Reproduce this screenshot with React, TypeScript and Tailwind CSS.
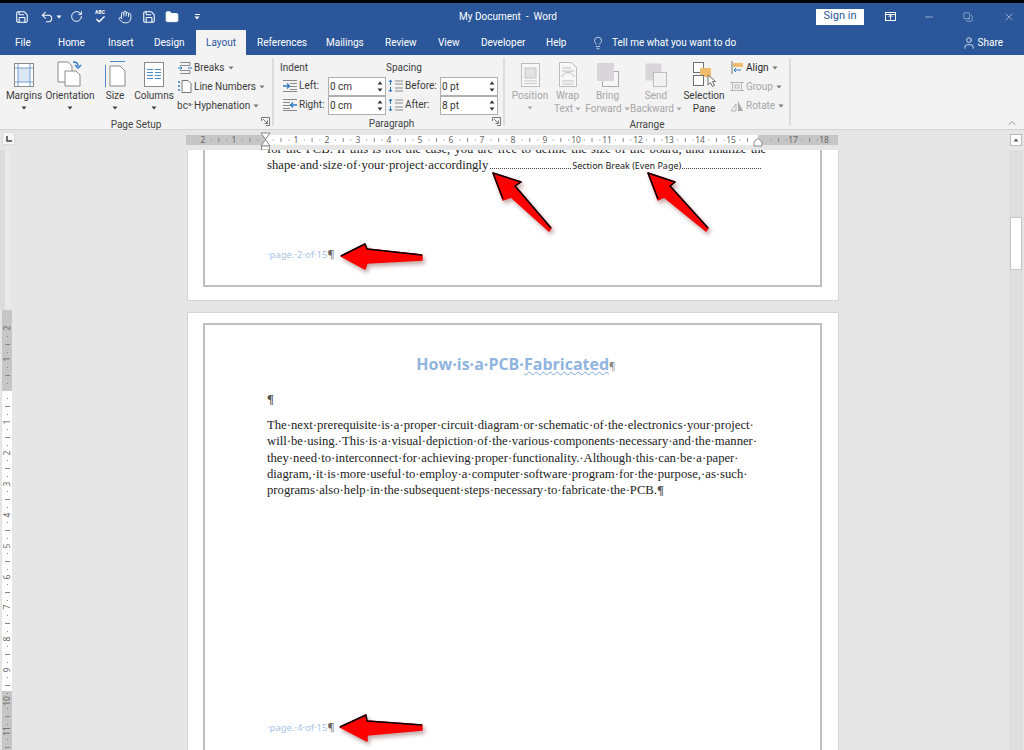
import React from "react";
import { Save, Undo2, RotateCw, Hand, Lightbulb, User, Minus, X, Copy, ChevronUp, Folder, Check } from "lucide-react";

const Caret = ({ className = "" }: { className?: string }) => (
  <svg width="6" height="4" viewBox="0 0 6 4" className={className}><path d="M0.5 0.5h5L3 3.5z" fill="currentColor" /></svg>
);

const Launcher = () => (
  <svg width="9" height="9" viewBox="0 0 9 9" fill="none" stroke="#777"><path d="M.5 4V.5H8.5V8.5H5" /><path d="M2 2l4.5 4.5M6.5 3.5v3h-3" /></svg>
);

const tabs: [string, string][] = [
  ["Home", "w-[50px]"],
  ["Insert", "w-[46px]"],
  ["Design", "w-[42px]"],
];
const tabs2: [string, string][] = [
  ["References", "w-[69px]"],
  ["Mailings", "w-[59px]"],
  ["Review", "w-[53px]"],
  ["View", "w-[43px]"],
  ["Developer", "w-[65px]"],
  ["Help", "w-[45px]"],
];

const MarginsIcon = () => (
  <svg width="20" height="24" viewBox="0 0 20 24" fill="none">
    <rect x=".5" y=".5" width="19" height="23" fill="#fff" stroke="#8a8a8a" />
    <rect x="4" y="5" width="12" height="14" fill="#dbe7f3" />
    <path d="M4 .5v23M16 .5v23M.5 5h19M.5 19h19" stroke="#6f9fd0" />
  </svg>
);
const OrientationIcon = () => (
  <svg width="26" height="26" viewBox="0 0 26 26" fill="none">
    <path d="M1 1h10l4 4v16H1z" fill="#fff" stroke="#8a8a8a" />
    <path d="M8 10h11l4 4v11H8z" fill="#fff" stroke="#8a8a8a" />
    <path d="M16 1c3 0 5 1 5 4M18 4l3 3 3-3" stroke="#2f79c4" strokeWidth="1.5" />
  </svg>
);
const SizeIcon = () => (
  <svg width="21" height="26" viewBox="0 0 21 26" fill="none">
    <path d="M5 .5h15M.5 4v22" stroke="#4b8ac9" />
    <path d="M5 5h10l5 5v15H5z" fill="#fff" stroke="#8a8a8a" />
  </svg>
);
const ColumnsIcon = () => (
  <svg width="20" height="25" viewBox="0 0 20 25" fill="none">
    <rect x=".5" y=".5" width="19" height="24" fill="#fff" stroke="#8a8a8a" />
    <path d="M3 7.5h6M11 7.5h6M3 10.5h6M11 10.5h6M3 13.5h6M11 13.5h6M3 16.5h6M11 16.5h6" stroke="#4b8ac9" />
  </svg>
);

const BigBtn = ({ w, icon, lines, caret = false, disabled = false, ml = "" }: { w: string; icon: React.ReactNode; lines: React.ReactNode[]; caret?: boolean; disabled?: boolean; ml?: string }) => (
  <div className={`flex flex-col items-center shrink-0 ${w} ${ml} ${disabled ? "text-[#a6a6a6]" : "text-[#3c3c3c]"}`}>
    <div className="h-[29px] flex items-end justify-center">{icon}</div>
    <div className="mt-[2px] leading-[13px] text-center whitespace-nowrap">{lines[0]}</div>
    {lines[1] ? <div className="leading-[13px] text-center whitespace-nowrap flex items-center gap-[2px]">{lines[1]}</div> : null}
    {caret ? <Caret className="mt-[4px]" /> : null}
  </div>
);

const SmallRow = ({ icon, label, disabled = false, bold = false }: { icon: React.ReactNode; label: string; disabled?: boolean; bold?: boolean }) => (
  <div className={`h-[19px] flex items-center ${disabled ? "text-[#a6a6a6]" : bold ? "text-[#262626]" : "text-[#3c3c3c]"}`}>
    <div className="w-[16px] flex justify-center shrink-0">{icon}</div>
    <span className="ml-[1px]">{label}</span>
    <Caret className="ml-[3px] text-[#777]" />
  </div>
);

const Spin = ({ value }: { value: string }) => (
  <div className="h-[19px] w-[58px] -mb-px bg-white border border-[#b0b0b0] flex items-center justify-between pl-[1px] pr-[2px] text-[#333]">
    <span>{value}</span>
    <div className="flex flex-col gap-[3px] text-[#333]">
      <Caret className="rotate-180" />
      <Caret />
    </div>
  </div>
);

const IndentIcon = ({ flip = false, spacing = false }: { flip?: boolean; spacing?: boolean }) =>
  spacing ? (
    <svg width="15" height="14" viewBox="0 0 15 14" fill="none">
      <path d="M7 2h8M7 5h8M7 9h8M7 12h8" stroke="#8a8a8a" />
      <path d="M2.5 1v5M2.5 8v5M1 3l1.5-2L4 3M1 11l1.5 2L4 11" stroke="#2f79c4" />
    </svg>
  ) : (
    <svg width="14" height="12" viewBox="0 0 14 12" fill="none" className={flip ? "-scale-x-100" : ""}>
      <path d="M0 .5h14M7 3.5h7M7 6.5h7M7 9.5h7M0 11.5h14" stroke="#8a8a8a" />
      <path d="M0 6h6M4 3.5L6.5 6 4 8.5" stroke="#2f79c4" strokeWidth="1.3" />
    </svg>
  );

const PositionIcon = () => (
  <svg width="19" height="24" viewBox="0 0 19 24" fill="none">
    <rect x=".5" y=".5" width="18" height="23" fill="#f7f7f7" stroke="#bdbdbd" />
    <rect x="4" y="5" width="11" height="10" fill="#e2e2e2" stroke="#c8c8c8" />
    <path d="M3 18h13M3 20.5h13" stroke="#c8c8c8" />
  </svg>
);
const WrapIcon = () => (
  <svg width="18" height="25" viewBox="0 0 18 25" fill="none">
    <path d="M.5.5h12l5 5v19H.5z" fill="#f7f7f7" stroke="#bdbdbd" />
    <path d="M3 6h9M3 9h12M3 19h12M3 22h12M3 15c1-6 11-6 12 0" stroke="#c0c0c0" />
  </svg>
);
const BringIcon = ({ back = false }: { back?: boolean }) => (
  <svg width="22" height="24" viewBox="0 0 22 24" fill="none">
    {back ? (
      <>
        <rect x=".5" y=".5" width="16" height="17" fill="#d9d6da" />
        <rect x="8.5" y="9.5" width="13" height="14" fill="#f2f2f2" stroke="#bdbdbd" />
      </>
    ) : (
      <>
        <rect x="5.5" y="8.5" width="16" height="15" fill="#f7f7f7" stroke="#aaa" />
        <rect x="0" y="0" width="17" height="18" fill="#d9d6da" />
      </>
    )}
  </svg>
);
const SelectionIcon = () => (
  <svg width="23" height="25" viewBox="0 0 23 25" fill="none">
    <rect x=".5" y=".5" width="10" height="10" fill="#fff" stroke="#6f6f6f" />
    <rect x="7" y="6" width="11" height="9" fill="#f0bb6d" />
    <rect x=".5" y="13.5" width="10" height="10" fill="#fff" stroke="#6f6f6f" />
    <path d="M15 13v10l2.500-2.500 2 4 2-1-2-4h3z" fill="#fff" stroke="#6f6f6f" />
  </svg>
);

const RULER_NUMS: [string, number][] = [
  ["2", 203], ["1", 234], ["1", 296], ["2", 327], ["3", 358], ["4", 389], ["5", 420], ["6", 451], ["7", 482], ["8", 513], ["9", 545],
  ["10", 576], ["11", 607], ["12", 638], ["13", 669], ["14", 700], ["15", 731], ["17", 793], ["18", 824],
];

const HRuler = () => {
  const ticks: React.ReactNode[] = [];
  for (let i = -2; i < 18; i++) {
    const b = 265 + i * 31.1;
    ticks.push(<rect key={`a${i}`} x={b + 15.5} y="8" width="1" height="4" fill="#888" />);
    ticks.push(<rect key={`b${i}`} x={b + 7.8} y="9.500" width="1" height="1" fill="#888" />);
    ticks.push(<rect key={`c${i}`} x={b + 23.3} y="9.500" width="1" height="1" fill="#888" />);
  }
  return (
    <svg width="1024" height="20" viewBox="0 0 1024 20" className="block">
      <rect x="186" y="5" width="80" height="10" fill="#c6c6c6" />
      <rect x="266" y="5" width="492" height="10" fill="#fff" />
      <rect x="758" y="5" width="80" height="10" fill="#c6c6c6" />
      {ticks}
      {RULER_NUMS.map(([n, x], i) => (
        <text key={i} x={x} y="13" textAnchor="middle" fontSize="8.5" fill="#666" fontFamily="Noto Sans, sans-serif">{n}</text>
      ))}
      <path d="M261 3h9l-4.500 6.500 4.500 6.500h-9l4.500-6.500z" fill="#fff" stroke="#8a8a8a" />
      <rect x="261.500" y="16" width="8" height="4" fill="#fff" stroke="#8a8a8a" />
      <path d="M754 16v-4l4-3.500 4 3.500v4z" fill="#fff" stroke="#8a8a8a" />
    </svg>
  );
};

const VRuler = () => {
  const nums: [string, number][] = [["2", 328], ["1", 359], ["1", 422], ["2", 453], ["3", 484], ["4", 515], ["5", 546], ["6", 577], ["7", 607], ["8", 639], ["9", 670], ["10", 701], ["11", 731]];
  const marks: React.ReactNode[] = [];
  for (let i = -3; i < 12; i++) {
    const b = 391 + i * 31;
    if (b < 300) continue;
    marks.push(<rect key={`a${i}`} x="5" y={b + 15 - 150} width="5" height="1" fill="#888" />);
    marks.push(<rect key={`b${i}`} x="7" y={b + 7 - 150} width="1" height="1" fill="#888" />);
    marks.push(<rect key={`c${i}`} x="7" y={b + 23 - 150} width="1" height="1" fill="#888" />);
  }
  return (
    <svg width="12" height="600" viewBox="0 0 12 600" className="block shrink-0">
      <rect x="0" y="0" width="5" height="160" fill="#dcdcdc" />
      <rect x="5" y="0" width="6" height="160" fill="#e9e9e9" />
      <rect x="2" y="160" width="10" height="81" fill="#c6c6c6" />
      <rect x="2" y="241" width="10" height="300" fill="#fff" />
      <rect x="2" y="541" width="10" height="59" fill="#c6c6c6" />
      {marks}
      {nums.map(([n, y], i) => (
        <text key={i} x="0" y="0" transform={`translate(10 ${y - 150}) rotate(-90)`} textAnchor="middle" fontSize="8.5" fill="#666" fontFamily="Noto Sans, sans-serif">{n}</text>
      ))}
    </svg>
  );
};

const Pil = () => <span className="text-[#555] font-bold">¶</span>;

const Arrow = ({ points, edge }: { points: string; edge: string }) => (
  <g>
    <polygon points={points} fill="#ff0000" stroke="#ff0000" strokeWidth="1.500" strokeLinejoin="round" />
    <polyline points={edge} fill="none" stroke="#000" strokeWidth="1.500" strokeLinejoin="round" />
  </g>
);

export default function App() {
  return (
    <div className="relative w-[1024px] h-[750px] overflow-hidden bg-[#e6e6e6] text-[10px] font-['Roboto',sans-serif]">
      <div className="h-[3px] bg-black" />
      {/* Title bar */}
      <div className="h-[27px] bg-[#2b579a] flex items-center text-white relative">
        <div className="flex items-center ml-[15px] w-[190px] text-white">
          <Save size={14} strokeWidth={1.8} />
          <Undo2 size={14} strokeWidth={1.8} className="ml-[11px]" />
          <Caret className="ml-[2px]" />
          <RotateCw size={13} strokeWidth={1.8} className="ml-[8px]" />
          <div className="ml-[10px] w-[14px] flex flex-col items-center leading-none">
            <span className="text-[5px] font-bold leading-[6px]">ABC</span>
            <Check size={11} strokeWidth={3} className="-mt-[1px]" />
          </div>
          <Hand size={14} strokeWidth={1.5} className="ml-[11px]" />
          <Save size={14} strokeWidth={1.8} className="ml-[10px]" />
          <Folder size={14} strokeWidth={1.5} fill="#fff" className="ml-[9px]" />
          <div className="ml-[15px] flex flex-col items-center gap-[1px]">
            <div className="w-[5px] h-px bg-white" />
            <Caret />
          </div>
        </div>
        <div className="ml-[254px] w-[91px] whitespace-nowrap">My Document&nbsp; -&nbsp; Word</div>
        <div className="ml-[266px] w-[48px] h-[16px] bg-white text-[#2b579a] flex items-center justify-center text-[11px]">Sign in</div>
        <svg width="11" height="9" viewBox="0 0 11 9" fill="none" stroke="#fff" className="ml-[21px]"><rect x=".5" y=".5" width="10" height="8" /><path d="M.5 2.500h10M5.500 7.500v-4M3.500 5l2-2 2 2" /></svg>
        <Minus size={12} strokeWidth={1} className="ml-[27px]" />
        <Copy size={10} strokeWidth={1} className="ml-[28px] -scale-x-100 -scale-y-100" />
        <X size={12} strokeWidth={1} className="ml-[30px]" />
      </div>
      {/* Tabs */}
      <div className="h-[25px] bg-[#2b579a] flex items-stretch text-white text-[10px]">
        <div className="w-[58px] pl-[15px] flex items-center shrink-0">File</div>
        {tabs.map(([t, w]) => (
          <div key={t} className={`${w} flex items-center h-full shrink-0`}>{t}</div>
        ))}
        <div className="w-[50px] h-[25px] bg-[#f3f3f3] text-[#2b579a] flex items-center justify-center shrink-0">Layout</div>
        <div className="flex items-center ml-[11px]">
          {tabs2.map(([t, w]) => (
            <div key={t} className={`${w} flex items-center h-full shrink-0 whitespace-nowrap`}>{t}</div>
          ))}
        </div>
        <Lightbulb size={14} strokeWidth={1.2} className="self-center" />
        <div className="ml-[7px] self-center whitespace-nowrap">Tell me what you want to do</div>
        <div className="ml-auto mr-[21px] flex items-center gap-[2px]">
          <User size={14} strokeWidth={1.3} />
          <span>Share</span>
        </div>
      </div>
      {/* Ribbon */}
      <div className="h-[75px] bg-[#f3f3f3] border-b border-[#d4d4d4] flex relative">
        {/* Page setup */}
        <div className="w-[274px] shrink-0 my-[3px] border-r-2 border-[#dcdcdc] flex flex-col relative">
          <div className="flex h-[58px] pl-[3px]">
            <BigBtn w="w-[42px]" icon={<MarginsIcon />} lines={["Margins"]} caret />
            <BigBtn w="w-[50px]" icon={<OrientationIcon />} lines={["Orientation"]} caret />
            <BigBtn w="w-[40px]" icon={<SizeIcon />} lines={["Size"]} caret />
            <BigBtn w="w-[38px]" icon={<ColumnsIcon />} lines={["Columns"]} caret />
            <div className="flex flex-col ml-[4px]">
              <SmallRow
                label="Breaks"
                icon={<svg width="14" height="12" viewBox="0 0 14 12" fill="none"><path d="M2 .5h10v3H2M2 11.500h10v-3H2" stroke="#8a8a8a" /><path d="M0 6h4M2.500 4.500L4 6 2.500 7.500M10 6h4" stroke="#2f79c4" /></svg>}
              />
              <SmallRow
                label="Line Numbers"
                icon={<svg width="14" height="13" viewBox="0 0 14 13" fill="none"><path d="M4 .5h6l3 3v9H4z" fill="#fff" stroke="#777" /><path d="M1 1v2M1 5v2M1 9v2" stroke="#2f79c4" strokeWidth="1.500" /></svg>}
              />
              <SmallRow
                label="Hyphenation"
                icon={<span className="text-[10px] leading-none text-[#444] whitespace-nowrap">bc<sup className="text-[6px]">a-</sup></span>}
              />
            </div>
          </div>
          <div className="text-center text-[#444] leading-[12px] mt-[4px]">Page Setup</div>
          <div className="absolute right-[2px] bottom-[0px]"><Launcher /></div>
        </div>
        {/* Paragraph */}
        <div className="w-[231px] shrink-0 my-[3px] border-r-2 border-[#dcdcdc] flex flex-col relative pl-[6px]">
          <div className="h-[58px] flex flex-col">
            <div className="flex h-[18px] items-center text-[#3c3c3c]">
              <span className="w-[106px]">Indent</span>
              <span>Spacing</span>
            </div>
            <div className="flex h-[19px] items-center text-[#3c3c3c]">
              <div className="w-[48px] flex items-center gap-[2px] pl-[3px]"><IndentIcon /><span>Left:</span></div>
              <Spin value="0 cm" />
              <div className="w-[54px] flex items-center gap-[2px] pl-[2px]"><IndentIcon spacing /><span>Before:</span></div>
              <Spin value="0 pt" />
            </div>
            <div className="flex h-[19px] items-center text-[#3c3c3c]">
              <div className="w-[48px] flex items-center gap-[2px] pl-[3px]"><IndentIcon flip /><span>Right:</span></div>
              <Spin value="0 cm" />
              <div className="w-[54px] flex items-center gap-[2px] pl-[2px]"><IndentIcon spacing /><span>After:</span></div>
              <Spin value="8 pt" />
            </div>
          </div>
          <div className="text-center text-[#444] leading-[12px] mt-[4px]">Paragraph</div>
          <div className="absolute right-[2px] bottom-[0px]"><Launcher /></div>
        </div>
        {/* Arrange */}
        <div className="w-[286px] shrink-0 my-[3px] border-r-2 border-[#dcdcdc] flex flex-col relative">
          <div className="flex h-[58px] pl-[5px]">
            <BigBtn w="w-[40px]" icon={<PositionIcon />} lines={["Position"]} caret disabled />
            <BigBtn w="w-[35px]" icon={<WrapIcon />} lines={["Wrap", <React.Fragment key="t">Text<Caret /></React.Fragment>]} disabled />
            <BigBtn w="w-[45px]" icon={<BringIcon />} lines={["Bring", <React.Fragment key="t">Forward<Caret /></React.Fragment>]} disabled />
            <BigBtn w="w-[52px]" icon={<BringIcon back />} lines={["Send", <React.Fragment key="t">Backward<Caret /></React.Fragment>]} disabled />
            <BigBtn w="w-[44px]" icon={<SelectionIcon />} lines={["Selection", "Pane"]} />
            <div className="flex flex-col ml-[3px]">
              <SmallRow
                bold
                label="Align"
                icon={<svg width="13" height="13" viewBox="0 0 13 13" fill="none"><path d="M1 0v13" stroke="#777" /><rect x="2" y="2" width="10" height="4" fill="#f0bb6d" /><path d="M10 9H3M5 7L3 9l2 2" stroke="#2f79c4" /></svg>}
              />
              <SmallRow
                disabled
                label="Group"
                icon={<svg width="14" height="13" viewBox="0 0 14 13" fill="none" stroke="#b5b5b5"><rect x="2.500" y="2.500" width="9" height="8" /><rect x="5" y="5" width="4" height="3" /><path d="M0 2.500h2M12 2.500h2M0 10.500h2M12 10.500h2" /></svg>}
              />
              <SmallRow
                disabled
                label="Rotate"
                icon={<svg width="14" height="12" viewBox="0 0 14 12"><path d="M1 11l5-7v7z" fill="none" stroke="#b5b5b5" /><path d="M8 1v10h5z" fill="#a8a8a8" /></svg>}
              />
            </div>
          </div>
          <div className="text-center text-[#444] leading-[12px] mt-[4px]">Arrange</div>
        </div>
        <ChevronUp size={12} strokeWidth={1.2} className="absolute right-[6px] bottom-[0px] text-[#555]" />
      </div>
      {/* Ruler row */}
      <div className="h-[20px] relative">
        <HRuler />
        <div className="absolute left-[2px] top-[2px] w-[13px] h-[13px] bg-[#f5f5f5] border border-[#dcdcdc] flex items-center justify-center">
          <svg width="6" height="6" viewBox="0 0 6 6"><path d="M1 0v5h5" fill="none" stroke="#444" strokeWidth="1.500" /></svg>
        </div>
        <div className="absolute right-[2px] top-[4px] w-[12px] h-[12px] bg-white border border-[#b8b8b8] flex items-center justify-center text-[#555]">
          <Caret className="rotate-180" />
        </div>
      </div>
      {/* Document */}
      <div className="h-[600px] flex overflow-hidden">
        <VRuler />
        <div className="w-[175px] shrink-0" />
        <div className="w-[652px] shrink-0 flex flex-col gap-[11px] font-['Liberation_Serif',serif] text-[12.7px] leading-[16.25px] text-[#222]">
          {/* Page 1 */}
          <div className="h-[151px] shrink-0 bg-white border border-t-0 border-[#d4d4d4] pl-[15px] pr-[16px] overflow-hidden">
            <div className="h-[137px] border-2 border-t-0 border-[#bfbfbf] pl-[62px] overflow-hidden relative">
              <div className="-mt-[9px] whitespace-nowrap">for·the·PCB.·If·this·is·not·the·case,·you·are·free·to·define·the·size·of·the·board,·and·finalize·the·</div>
              <div className="whitespace-nowrap flex items-baseline">
                <span>shape·and·size·of·your·project·accordingly</span>
                <span className="ml-[2px] w-[81px] h-0 border-b border-dotted border-[#444]" />
                <span className="ml-[1px] text-[9px] font-['Noto_Sans',sans-serif] text-[#222]">Section Break (Even Page)</span>
                <span className="ml-[1px] w-[79px] h-0 border-b border-dotted border-[#444]" />
              </div>
              <div className="mt-[71px] text-[9.5px] text-[#a9c5e8] font-['Noto_Sans',sans-serif] whitespace-nowrap">·page.·2·of·15<span className="text-[#666] text-[11px]">¶</span></div>
            </div>
          </div>
          {/* Page 2 */}
          <div className="flex-1 bg-white border border-b-0 border-[#d4d4d4] pl-[15px] pr-[16px] pt-[10px]">
            <div className="h-[450px] border-2 border-b-0 border-[#bfbfbf] pl-[62px] pr-[55px]">
              <div className="mt-[27px] text-center whitespace-nowrap font-['Open_Sans',sans-serif] font-bold text-[16px] leading-[24px] text-[#8fb4de]">
                How·is·a·PCB·<span className="underline decoration-wavy decoration-[#7da7d9] decoration-1">Fabricated</span><span className="text-[10px] text-[#888] font-normal">¶</span>
              </div>
              <div className="mt-[13px] h-[16px] text-[#333]"><Pil /></div>
              <div className="mt-[10px] whitespace-nowrap">
                <div>The·next·prerequisite·is·a·proper·circuit·diagram·or·schematic·of·the·electronics·your·project·</div>
                <div>will·be·using.·This·is·a·visual·depiction·of·the·various·components·necessary·and·the·manner·</div>
                <div>they·need·to·interconnect·for·achieving·proper·functionality.·Although·this·can·be·a·paper·</div>
                <div>diagram,·it·is·more·useful·to·employ·a·computer·software·program·for·the·purpose,·as·such·</div>
                <div>programs·also·help·in·the·subsequent·steps·necessary·to·fabricate·the·PCB.<Pil /></div>
              </div>
              <div className="mt-[221px] text-[9.5px] text-[#a9c5e8] font-['Noto_Sans',sans-serif] whitespace-nowrap">·page.·4·of·15<span className="text-[#666] text-[11px]">¶</span></div>
            </div>
          </div>
        </div>
        <div className="flex-1" />
        {/* Scrollbar */}
        <div className="w-[14px] mr-[1px] bg-[#dedede] shrink-0 pt-[67px]">
          <div className="w-[12px] h-[53px] ml-[1px] bg-white border border-[#c8c8c8]" />
        </div>
      </div>
      {/* Callout arrows */}
      <svg width="1024" height="750" viewBox="0 0 1024 750" className="absolute left-0 top-0 pointer-events-none drop-shadow-[2px_3px_2px_rgba(120,60,60,0.45)]">
        <Arrow points="493,173 521,182 515,186 551,228 549,231 511,197 503,200" edge="503,199 493,173 521,182 515,186 551,228" />
        <Arrow points="648,173 675,182 670,186 708,228 706,231 664,197 658,200" edge="658,199 648,173 675,182 670,186 708,228" />
        <Arrow points="341,256 365,244 367,249 422,255 422,260 367,263 365,269" edge="341,256 365,244 367,249 422,255" />
        <Arrow points="340,727 366,715 367,721 422,725 422,730 367,735 367,741" edge="340,727 366,715 367,721 422,725" />
      </svg>
    </div>
  );
}
